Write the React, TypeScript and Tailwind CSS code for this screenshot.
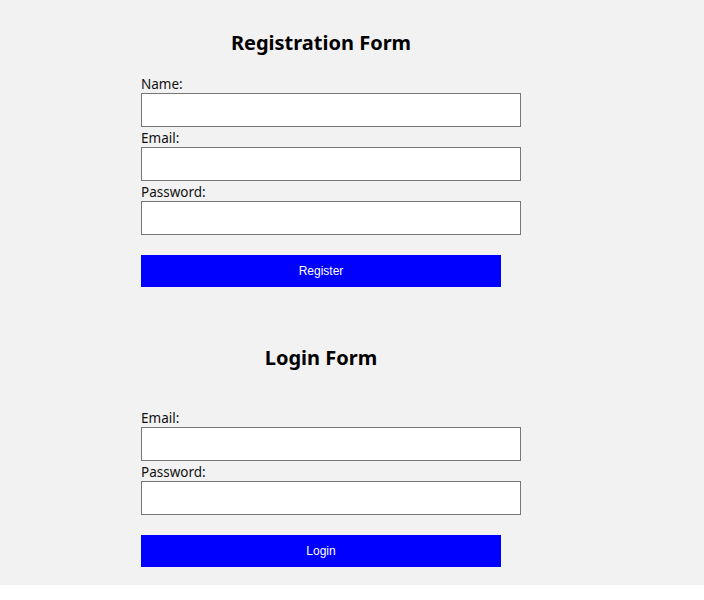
export default function App() {
  return (
    <div className="min-h-[600px] bg-white">
      <div className="h-[585px] bg-[#f2f2f2] pl-[141px] pt-[28px]" style={{ fontFamily: '"Noto Sans", "Open Sans", sans-serif' }}>
        <div className="w-[360px]">
          {/* Registration */}
          <h2 className="text-center text-[20px] font-bold leading-[30px] text-black">Registration Form</h2>
          <form className="mt-[15px]">
            <label className="block pt-[2px] text-[13.5px] leading-[18px] text-[#111]">Name:</label>
            <input type="text" className="box-border block h-[34px] w-[380px] border border-[#767676] bg-white px-[10px] outline-none" />
            <label className="block pt-[2px] text-[13.5px] leading-[18px] text-[#111]">Email:</label>
            <input type="email" className="box-border block h-[34px] w-[380px] border border-[#767676] bg-white px-[10px] outline-none" />
            <label className="block pt-[2px] text-[13.5px] leading-[18px] text-[#111]">Password:</label>
            <input type="password" className="box-border block h-[34px] w-[380px] border border-[#767676] bg-white px-[10px] outline-none" />
            <button type="button" className="mt-[20px] block h-[32px] w-[360px] bg-[#0000ff] text-[12px] text-white" style={{ fontFamily: '"Liberation Sans", Arial, sans-serif' }}>
              Register
            </button>
          </form>

          {/* Login */}
          <h2 className="mt-[56px] text-center text-[20px] font-bold leading-[30px] text-black">Login Form</h2>
          <form className="mt-[34px]">
            <label className="block pt-[2px] text-[13.5px] leading-[18px] text-[#111]">Email:</label>
            <input type="email" className="box-border block h-[34px] w-[380px] border border-[#767676] bg-white px-[10px] outline-none" />
            <label className="block pt-[2px] text-[13.5px] leading-[18px] text-[#111]">Password:</label>
            <input type="password" className="box-border block h-[34px] w-[380px] border border-[#767676] bg-white px-[10px] outline-none" />
            <button type="button" className="mt-[20px] block h-[32px] w-[360px] bg-[#0000ff] text-[12px] text-white" style={{ fontFamily: '"Liberation Sans", Arial, sans-serif' }}>
              Login
            </button>
          </form>
        </div>
      </div>
    </div>
  );
}
